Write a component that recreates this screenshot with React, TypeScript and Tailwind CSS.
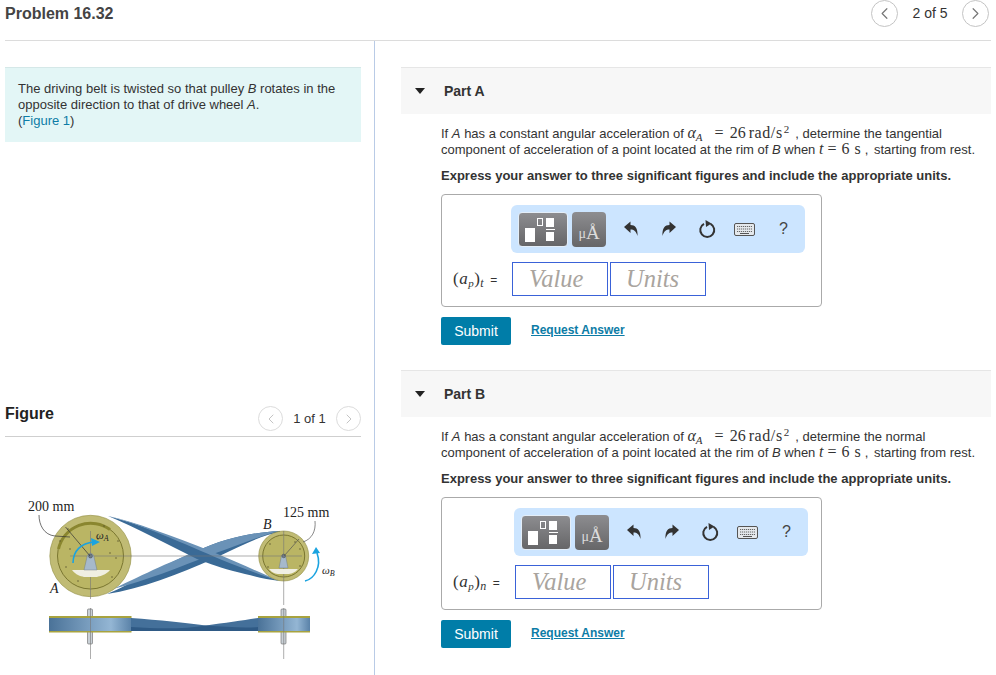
import { ChevronLeft, ChevronRight } from 'lucide-react';

function Pager({ text, faded }: { text: string; faded?: boolean }) {
    const btn = faded
        ? 'flex h-[25px] w-[25px] items-center justify-center rounded-full border border-[#dcdcdc] text-[#c4c4c4]'
        : 'flex h-[27px] w-[27px] items-center justify-center rounded-full border border-[#c4c4c4] text-[#777]';
    return (
        <div className={faded ? 'mt-[2px] flex items-center' : 'mr-[2px] flex items-center'}>
            <span className={btn}><ChevronLeft size={faded ? 16 : 19} strokeWidth={1.5} /></span>
            <span className={faded ? 'w-[53px] text-center text-[13px] text-[#333]' : 'w-[64px] text-center text-[14px] text-[#333]'}>{text}</span>
            <span className={btn}><ChevronRight size={faded ? 16 : 19} strokeWidth={1.5} /></span>
        </div>
    );
}

function Toolbar() {
    return (
        <div className="flex h-[48px] w-[294px] items-center rounded-[6px] bg-[#cce5ff] pl-[7px]">
            <div className="flex h-[35px] w-[50px] items-center rounded-[4px] border border-[#e4eef8] bg-gradient-to-b from-[#8d8d90] to-[#666668] pl-[6px]">
                <div className="mt-[12px] h-[14px] w-[10px] bg-white" />
                <div className="mb-[14px] ml-[2px] h-[8px] w-[6px] border border-white" />
                <div className="ml-[3px] flex flex-col gap-[2px]">
                    <div className="h-[9px] w-[8px] bg-white" />
                    <div className="h-[1px] w-[9px] bg-white" />
                    <div className="h-[9px] w-[8px] bg-white" />
                </div>
            </div>
            <div className="ml-[4px] flex h-[35px] w-[34px] items-end justify-center rounded-[4px] bg-gradient-to-b from-[#8d8d90] to-[#666668] pb-[5px] font-['Liberation_Serif',serif] text-[#dcdcdc]">
                <span className="text-[14px] leading-[16px]">μ</span>
                <span className="text-[19px] leading-[19px]">Å</span>
            </div>
            <svg className="ml-[17px]" width="16" height="16" viewBox="0 0 16 16">
                <path d="M1 6 L7.5 0.5 V4 C12 4 15 7 14.5 15 C13 10 11 8.5 7.5 8.5 V12 Z" fill="#333" />
            </svg>
            <svg className="ml-[22px]" width="16" height="16" viewBox="0 0 16 16">
                <path d="M15 6 L8.5 0.5 V4 C4 4 1 7 1.5 15 C3 10 5 8.5 8.5 8.5 V12 Z" fill="#333" />
            </svg>
            <svg className="ml-[21px]" width="18" height="18" viewBox="0 0 18 18">
                <path d="M6 3.8 A7 7 0 1 0 12.5 3.8" fill="none" stroke="#333" strokeWidth="2" />
                <path d="M7.5 0 L13.5 3.6 L8 7 Z" fill="#333" />
            </svg>
            <svg className="ml-[18px]" width="21" height="13" viewBox="0 0 21 13">
                <rect x="0.5" y="0.5" width="20" height="12" rx="1.5" fill="#e4e8ec" stroke="#555" />
                <path d="M3 3.5 H18 M3 6 H18 M3 8.5 H18" stroke="#666" strokeWidth="1.2" strokeDasharray="1.2 0.8" />
                <path d="M6 10.5 H15" stroke="#555" strokeWidth="1" />
            </svg>
            <span className="ml-[24px] text-[16px] text-[#444]">?</span>
        </div>
    );
}

function Part({ name, kind, sub, offset }: { name: string; kind: string; sub: string; offset: string }) {
    return (
        <section>
            <div className="flex h-[47px] items-center border-t border-[#e6e6e6] bg-[#f7f7f7] pl-[14px]">
                <span className="h-0 w-0 border-x-[5px] border-t-[6px] border-x-transparent border-t-[#222]" />
                <h2 className="ml-[19px] text-[14px] font-bold text-[#333]">{name}</h2>
            </div>
            <div className="pl-[40px] pr-[10px]">
                <div className="mt-[11px] text-[13px] leading-[16px] text-[#333]">
                    <div className="h-[16px] whitespace-nowrap">
                        If <i>A</i> has a constant angular acceleration of{' '}
                        <span className="font-['Liberation_Serif',serif] text-[16px]">
                            <i>α</i><sub className="text-[11px]"><i>A</i></sub>
                            <span className="ml-[12px]">=</span>
                            <span className="ml-[6px]">26</span>
                            <span className="ml-[3px] tracking-[0.6px]">rad/s</span><sup className="ml-[1px] text-[11px]">2</sup>
                        </span>
                        <span className="ml-[6px]">,</span> determine the {kind}
                    </div>
                    <div className="h-[16px] whitespace-nowrap">
                        component of acceleration of a point located at the rim of <i>B</i> when{' '}
                        <span className="font-['Liberation_Serif',serif] text-[16px]">
                            <i>t</i><span className="ml-[4px]">=</span><span className="ml-[5px]">6</span><span className="ml-[5px]">s</span>
                        </span>
                        <span className="ml-[4px]">,</span>
                        <span className="ml-[2px]"> starting from rest.</span>
                    </div>
                </div>
                <p className="mt-[11px] text-[13px] font-bold leading-[16px] text-[#333]">
                    Express your answer to three significant figures and include the appropriate units.
                </p>
                <div className="mt-[10px] h-[113px] w-[381px] rounded-[4px] border border-[#aaa] pt-[10px]">
                    <div className={offset}><Toolbar /></div>
                    <div className="mt-[9px] flex items-center">
                        <div className={sub === 't' ? 'w-[70px] whitespace-nowrap pl-[11px] text-[12px] text-[#333]' : 'w-[73px] whitespace-nowrap pl-[11px] text-[12px] text-[#333]'}>
                            <span className="font-['Liberation_Serif',serif] text-[17px] tracking-[0.5px]">
                                (<i>a</i><sub className="text-[11px]"><i>p</i></sub>)<sub className="text-[12px]"><i>{sub}</i></sub>
                            </span>
                            <span className="ml-[6px]">=</span>
                        </div>
                        <div className="flex h-[34px] w-[96px] items-center border border-[#3a62d8] pl-[16px] font-['Liberation_Serif',serif] text-[24.5px] italic text-[#a9a49e]">Value</div>
                        <div className="ml-[2px] flex h-[34px] w-[96px] items-center border border-[#3a62d8] pl-[15px] font-['Liberation_Serif',serif] text-[24.5px] italic text-[#a9a49e]">Units</div>
                    </div>
                </div>
                <div className="mt-[10px] flex items-center">
                    <button className="h-[28px] w-[70px] rounded-[2px] bg-[#007da8] text-[14px] text-white">Submit</button>
                    <a className="mb-[2px] ml-[20px] text-[12px] font-bold text-[#0d7ca6] underline">Request Answer</a>
                </div>
            </div>
        </section>
    );
}

function Diagram() {
    const dotsA = [[60, 540], [68, 528], [104, 525], [118, 540], [116, 557], [66, 566], [78, 580], [112, 576], [110, 552], [98, 538], [70, 548]];
    const dotsB = [[270, 543], [295, 541], [300, 548], [268, 566], [300, 565]];
    return (
        <svg className="block" width="356" height="195" viewBox="5 480 356 195">
            <defs>
                <linearGradient id="side" x1="0" y1="0" x2="1" y2="0">
                    <stop offset="0" stopColor="#4a7298" />
                    <stop offset="0.75" stopColor="#94b6d4" />
                    <stop offset="1" stopColor="#5a82a8" />
                </linearGradient>
            </defs>
            {/* belts */}
            <path d="M107 593 C125 586 150 570 197 550 C225 537 255 531 280 530 L280 531 C262 534 240 545 213 558 C180 573 140 588 107 593 Z" fill="#3a6a96" />
            <path d="M113 588 C130 580 160 565 197 550 C225 537 255 531 280 530 C258 535 235 546 213 553 C180 566 145 580 113 588 Z" fill="#6a92b7" />
            <path d="M108 515 C135 522 170 535 213 552 C240 563 262 574 280 580 C262 578 250 574 233 570 C215 565 205 561 197 558 C170 545 135 526 108 515 Z" fill="#3a6a96" />
            <path d="M108 515 C135 521 170 534 213 551 C240 562 262 573 280 580 C262 575 240 566 222 559 C185 543 140 523 108 515 Z" fill="#6a92b7" />

            {/* wheel A */}
            <circle cx="90.5" cy="555" r="40.7" fill="#c0bb74" stroke="#8f8b3e" strokeWidth="0.6" />
            <circle cx="90.5" cy="555" r="33" fill="#bab564" stroke="#7a7630" strokeWidth="1" />
            <path d="M58.5 548 A33 33 0 0 1 110 528.5" fill="none" stroke="#8a862f" strokeWidth="3" />
            {dotsA.map(([x, y]) => <circle key={`${x}-${y}`} cx={x} cy={y} r="0.7" fill="#55522a" />)}

            {/* wheel B */}
            <circle cx="283.7" cy="555" r="25" fill="#c0bb74" stroke="#8f8b3e" strokeWidth="0.6" />
            <circle cx="283.7" cy="555" r="21" fill="#bab564" stroke="#7a7630" strokeWidth="1" />
            {dotsB.map(([x, y]) => <circle key={`${x}-${y}`} cx={x} cy={y} r="0.7" fill="#55522a" />)}

            {/* axis lines */}
            <path d="M70 555 H302 M90.5 530 V598 M283.7 530 V604" stroke="#777" strokeWidth="0.6" fill="none" />

            {/* brackets */}
            <path d="M72 569 H110 C106 574 100 575 97 576 H84 C80 575 76 574 72 569 Z" fill="#f0efe2" />
            <path d="M84 569 L87 556 C88 551 93 551 94 556 L97 569 Z" fill="#a6b9cb" stroke="#66727e" strokeWidth="0.4" />
            <circle cx="90.5" cy="555" r="2" fill="#6f7c88" stroke="#333" strokeWidth="0.4" />
            <path d="M269 568 H298 C295 572 290 573 288 573 H279 C276 573 272 572 269 568 Z" fill="#f0efe2" />
            <path d="M279 567 L281 557 C282 552 285 552 286 557 L288 567 Z" fill="#a6b9cb" stroke="#66727e" strokeWidth="0.4" />
            <circle cx="283.7" cy="555" r="1.8" fill="#6f7c88" stroke="#333" strokeWidth="0.4" />

            {/* leader lines */}
            <path d="M65.5 526 L90 555 M39 514 C39 524 44 534 55 535 L70 536" stroke="#333" strokeWidth="0.7" fill="none" />
            <path d="M299 538 L284 555 M315 520 C316 530 312 538 303 541" stroke="#555" strokeWidth="0.7" fill="none" />

            {/* arrows */}
            <path d="M73 562 C73 550 81 542 94 541" fill="none" stroke="#1aa3e0" strokeWidth="1.6" />
            <path d="M100 541 L91 537 L92 545 Z" fill="#1aa3e0" />
            <path d="M305 580 C314 578 322 566 317 552" fill="none" stroke="#1aa3e0" strokeWidth="1.6" />
            <path d="M316 546 L312 553 L320 552 Z" fill="#1aa3e0" />

            {/* side view */}
            <rect x="87.5" y="608" width="5" height="35" rx="1" fill="#c9d0d6" stroke="#666" strokeWidth="0.6" />
            <rect x="281" y="608" width="5" height="35" rx="1" fill="#c9d0d6" stroke="#666" strokeWidth="0.6" />
            <rect x="49" y="615" width="82.5" height="16.5" fill="#a8a33f" />
            <rect x="258" y="615" width="52" height="16.5" fill="#a8a33f" />
            <rect x="49" y="617" width="82.5" height="13" fill="url(#side)" />
            <rect x="258" y="617" width="52" height="13" fill="url(#side)" />
            <path d="M131 617 C160 619 185 622 206 624.5 C225 622 245 619 258 617 V630 H131 Z" fill="#44709a" />
            <path d="M131 626 C160 628 185 628 206 624.5 C225 626 245 627 258 626 V630 H131 Z" fill="#2f5a85" />
            <path d="M90.5 607 V658 M283.7 607 V658" stroke="#777" strokeWidth="0.6" />

            {/* labels */}
            <g className="font-['Liberation_Serif',serif]" fill="#222" fontSize="14">
                <text x="28" y="510">200 mm</text>
                <text x="283" y="516">125 mm</text>
                <text x="263" y="528" fontStyle="italic">B</text>
                <text x="50" y="592" fontStyle="italic" fontSize="14">A</text>
                <text x="96" y="538" fontStyle="italic" fontSize="11">ω<tspan fontSize="8" dy="2">A</tspan></text>
                <text x="322" y="573" fontStyle="italic" fontSize="11">ω<tspan fontSize="8" dy="2">B</tspan></text>
            </g>
        </svg>
    );
}

function App() {
    return (
        <main className="h-[675px] w-[996px] overflow-hidden bg-white font-['Liberation_Sans',Arial,sans-serif]">
            <header className="mx-[5px] flex h-[41px] items-start justify-between border-b border-[#dcdcdc]">
                <h1 className="text-[16px] font-bold leading-[27px] text-[#444]">Problem 16.32</h1>
                <Pager text="2 of 5" />
            </header>
            <div className="flex h-[634px]">
                <div className="w-[375px] border-r border-[#b9cbe6] pl-[5px] pr-[13px] pt-[26px]">
                    <div className="h-[75px] border-t border-[#d5e8e8] bg-[#e3f6f6] px-[13px] pt-[13px] text-[13px] leading-[16px] text-[#333]">
                        The driving belt is twisted so that pulley <i>B</i> rotates in the
                        <br />
                        opposite direction to that of drive wheel <i>A</i>.
                        <br />
                        (<span className="text-[#0d7ca6]">Figure 1</span>)
                    </div>
                    <div className="mt-[262px] flex h-[33px] items-start justify-between border-b border-[#cfcfcf]">
                        <h2 className="text-[16px] font-bold leading-[20px] text-[#222]">Figure</h2>
                        <Pager text="1 of 1" faded />
                    </div>
                    <div className="mt-[44px]"><Diagram /></div>
                </div>
                <div className="flex-1 pl-[26px] pr-[5px] pt-[26px]">
                    <Part name="Part A" kind="tangential" sub="t" offset="ml-[69px]" />
                    <div className="mt-[25px]">
                        <Part name="Part B" kind="normal" sub="n" offset="ml-[72px]" />
                    </div>
                </div>
            </div>
        </main>
    );
}

export default App;
